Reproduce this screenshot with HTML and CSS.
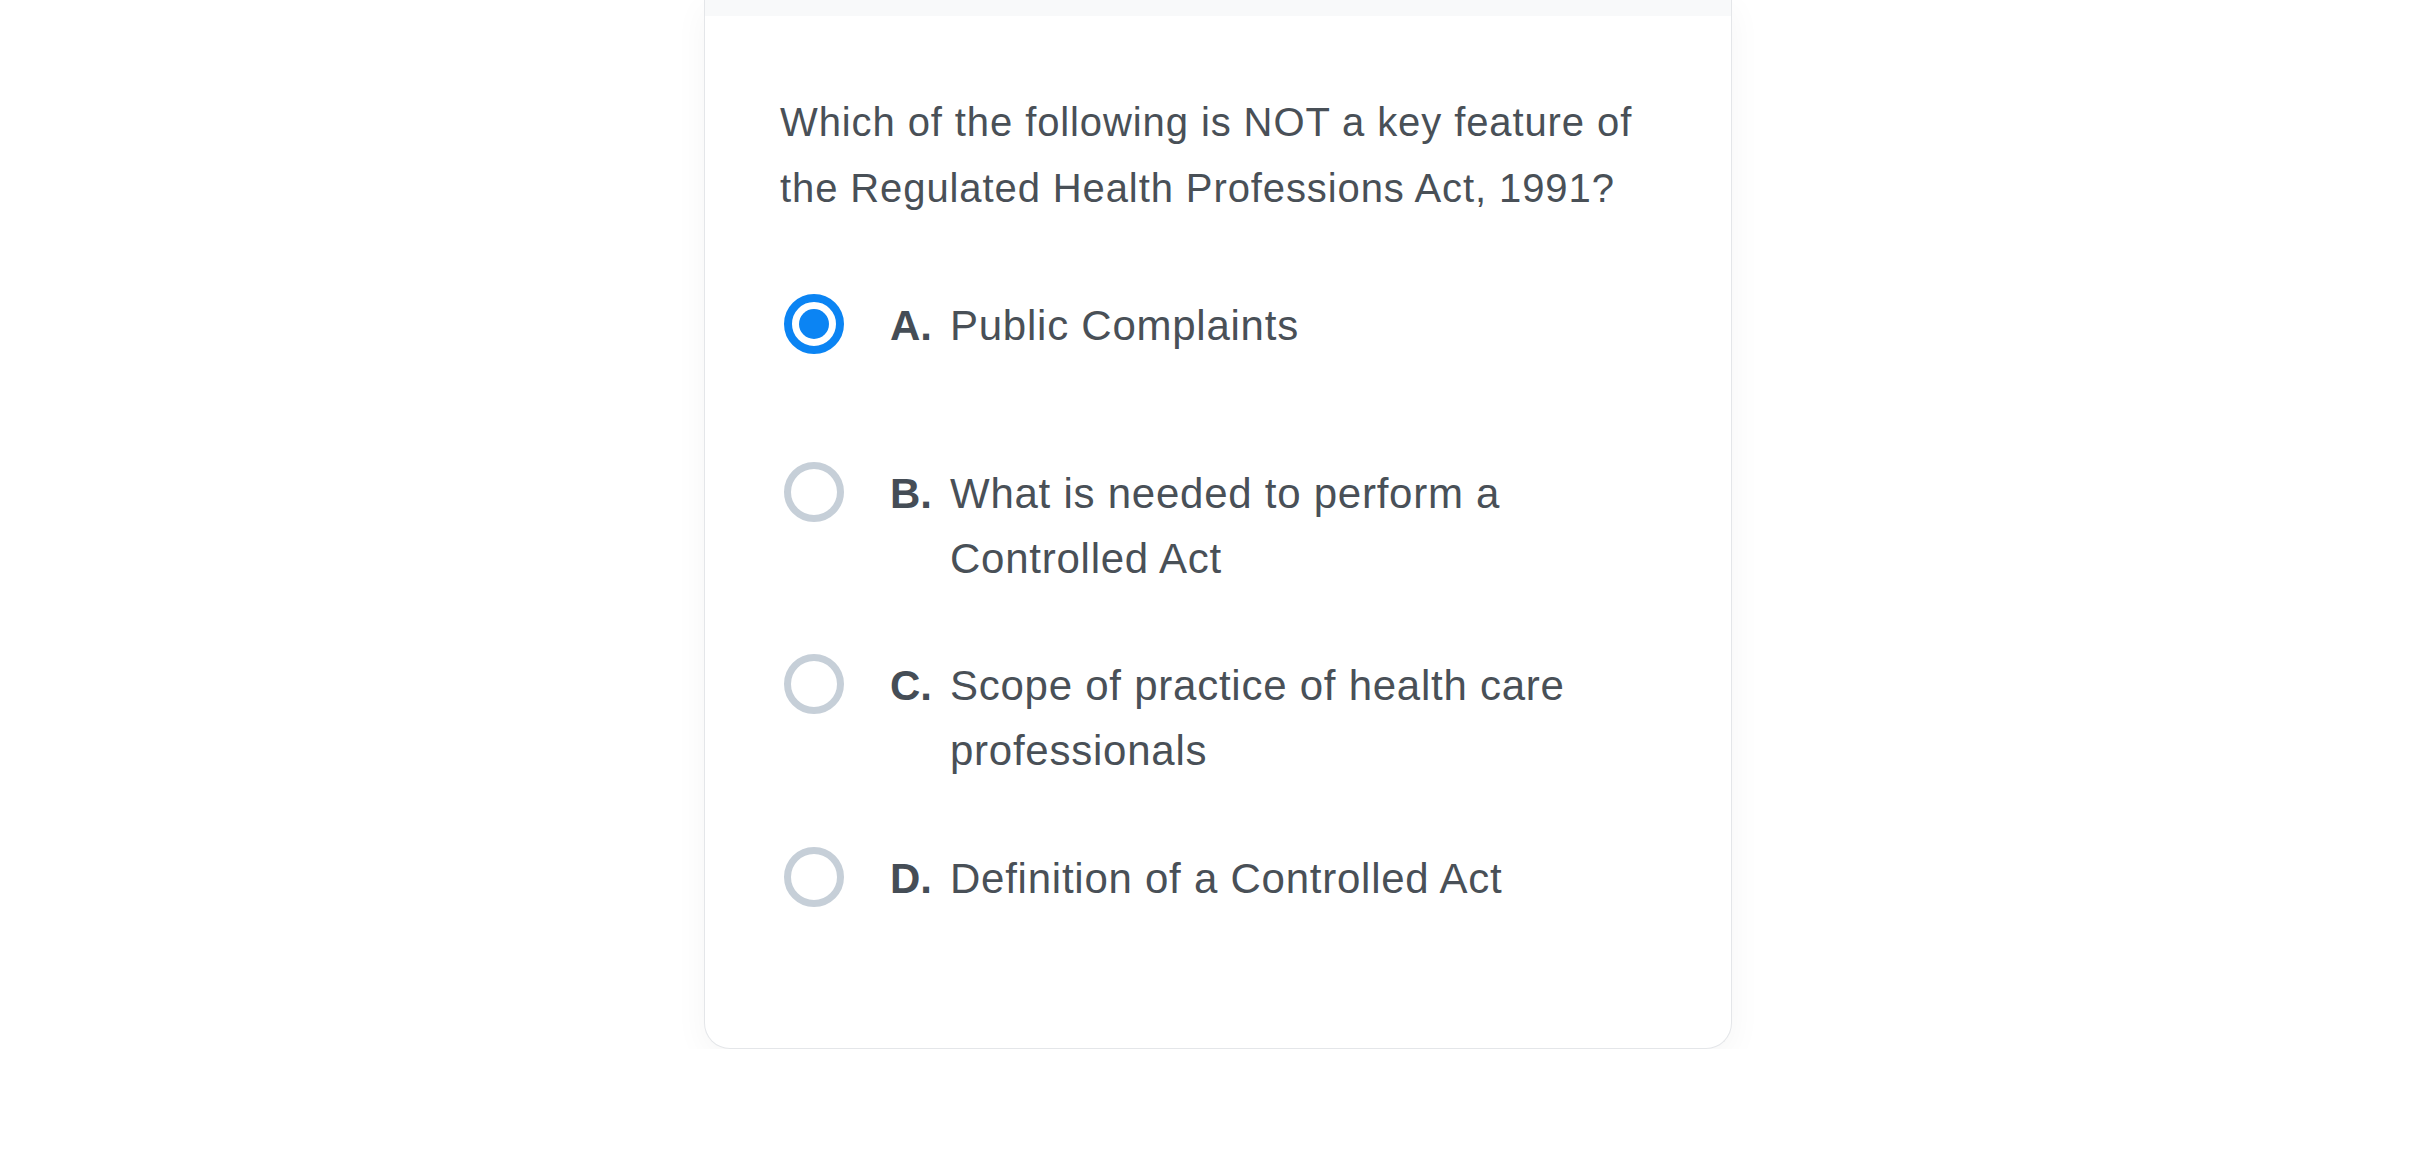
FILE: index.html
```html
<!DOCTYPE html>
<html lang="en">
<head>
<meta charset="utf-8">
<title>Quiz question</title>
<link rel="stylesheet" href="styles.css">
</head>
<body>
<main class="page">
  <section class="card">
    <div class="card-strip"></div>
    <div class="card-body">
      <p class="question">Which of the following is NOT a key feature of the Regulated Health Professions Act, 1991?</p>
      <ul class="options">
        <li class="option">
          <span class="radio radio-checked"><span class="radio-dot"></span></span>
          <span class="option-letter">A.</span>
          <span class="option-text">Public Complaints</span>
        </li>
        <li class="option">
          <span class="radio"></span>
          <span class="option-letter">B.</span>
          <span class="option-text">What is needed to perform a Controlled Act</span>
        </li>
        <li class="option">
          <span class="radio"></span>
          <span class="option-letter">C.</span>
          <span class="option-text">Scope of practice of health care professionals</span>
        </li>
        <li class="option">
          <span class="radio"></span>
          <span class="option-letter">D.</span>
          <span class="option-text">Definition of a Controlled Act</span>
        </li>
      </ul>
    </div>
  </section>
</main>
</body>
</html>
```

FILE: styles.css
```css
html, body {
  margin: 0;
  padding: 0;
  background: #ffffff;
}

body {
  font-family: "Liberation Sans", Arial, sans-serif;
  color: #495057;
}

.page {
  display: flex;
  justify-content: center;
}

.card {
  width: 1028px;
  box-sizing: border-box;
  background: #ffffff;
  border: 1px solid #e4e6e9;
  border-top: none;
  border-radius: 0 0 26px 26px;
  box-shadow: 0 8px 34px rgba(0, 0, 0, 0.045);
}

.card-strip {
  height: 16px;
  background: #f8f9fa;
}

.card-body {
  padding: 74px 75px 97px 75px;
}

.question {
  margin: 0 0 72px 0;
  font-size: 40px;
  line-height: 65.6px;
  letter-spacing: 0.9px;
  color: #495057;
}

.options {
  list-style: none;
  margin: 0;
  padding: 0;
  display: flex;
  flex-direction: column;
  gap: 62.5px;
}

.option {
  display: flex;
  align-items: flex-start;
  min-height: 105px;
  font-size: 42px;
  line-height: 65px;
  letter-spacing: 0.75px;
}

.radio {
  flex: 0 0 auto;
  width: 60px;
  height: 60px;
  box-sizing: border-box;
  margin: 1.3px 46px 0 4px;
  border: 7.5px solid #c6cfd8;
  border-radius: 50%;
  display: flex;
  align-items: center;
  justify-content: center;
}

.radio-checked {
  border-width: 8px;
  border-color: #0b84f3;
}

.radio-dot {
  width: 30px;
  height: 30px;
  border-radius: 50%;
  background: #0b84f3;
}

.option-letter {
  flex: 0 0 60px;
  font-weight: 700;
  color: #454d56;
  letter-spacing: 0;
}

.option-text {
  flex: 1 1 auto;
  color: #495057;
}
```
